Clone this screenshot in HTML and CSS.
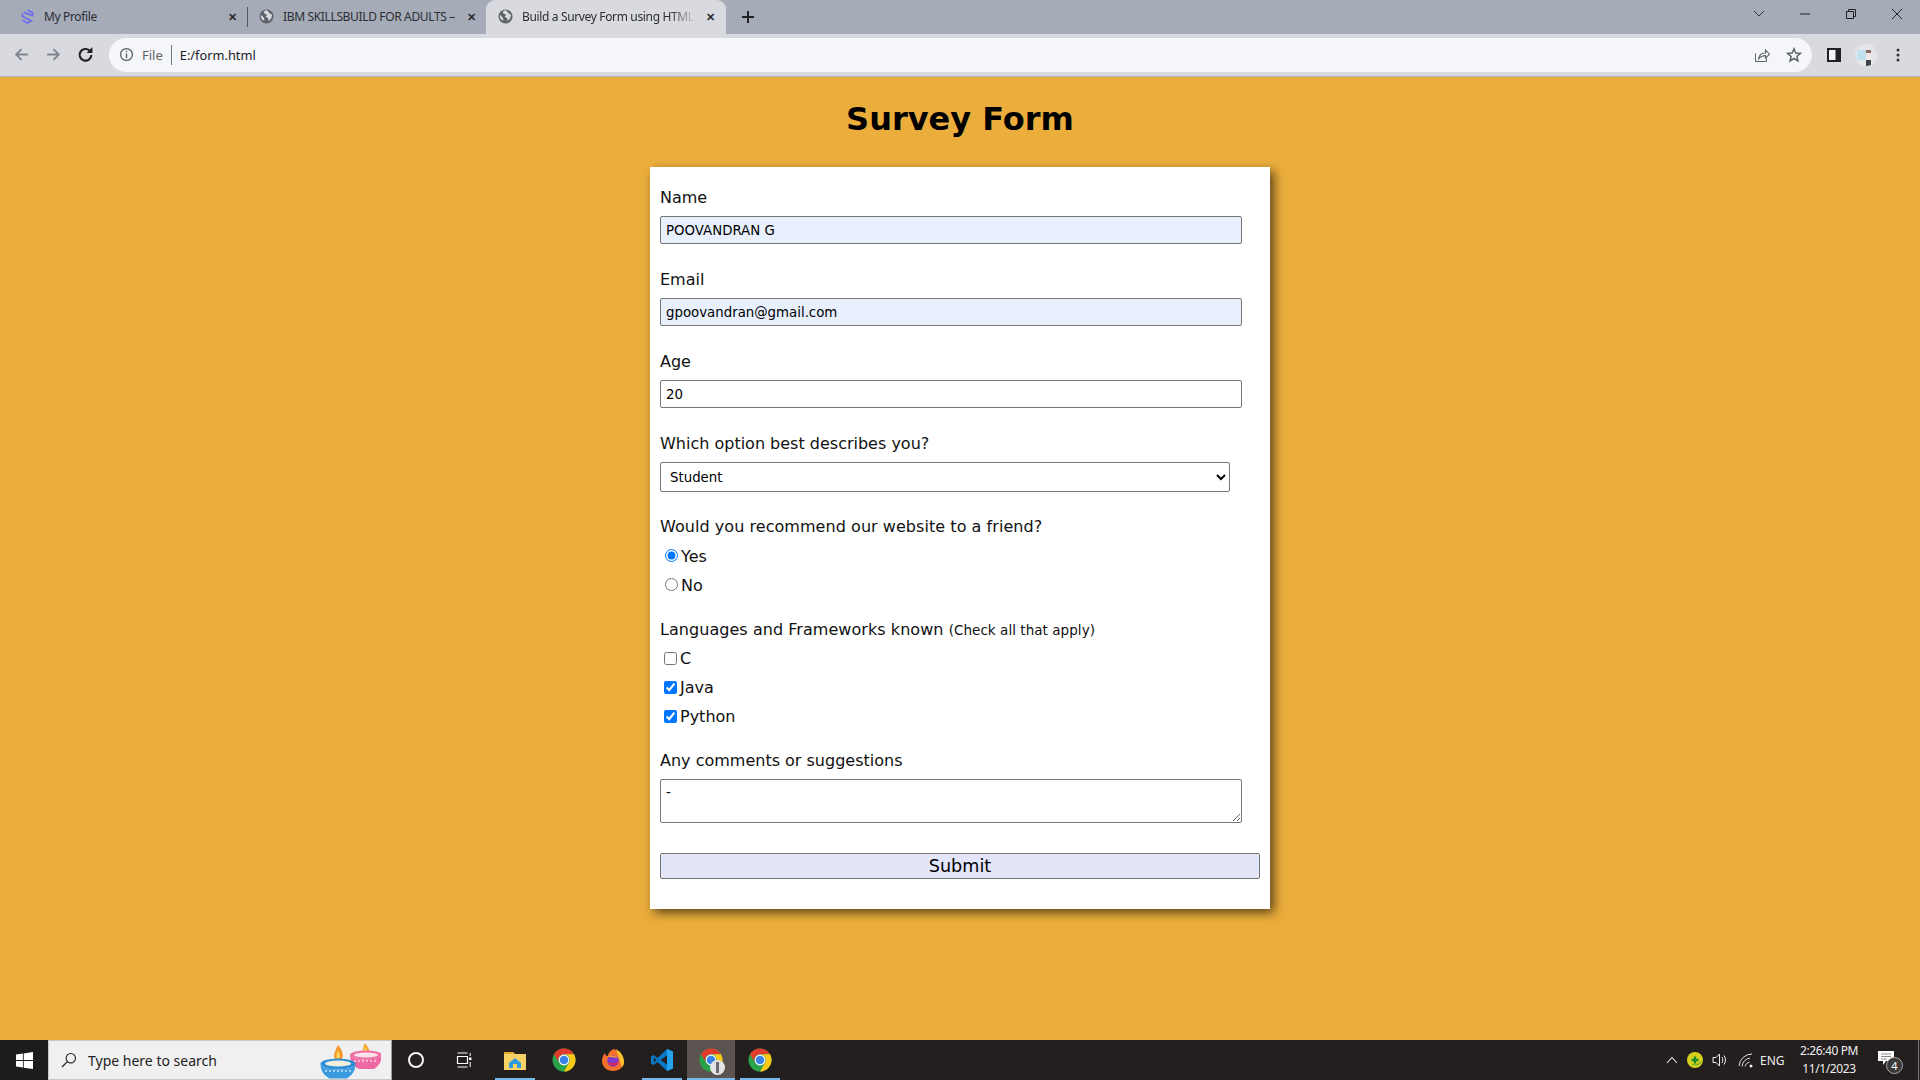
FILE: index.html
```html
<!DOCTYPE html>
<html lang="en">
<head>
<meta charset="utf-8">
<title>Build a Survey Form using HTML</title>
<link rel="stylesheet" href="styles.css">
</head>
<body>
<header class="chrome">
  <div class="tabstrip">
    <div class="tab">
      <svg class="favicon" viewBox="0 0 16 16"><path d="M8 1 13.500 4v3L4 3.600M2.600 4.600V8L12 12.600 8 15l-5.400-3" fill="none" stroke="#6a6cf0" stroke-width="1.700"/></svg>
      <span class="tab-title">My Profile</span>
      <span class="tab-x">✕</span>
    </div>
    <div class="tab-sep"></div>
    <div class="tab">
      <svg class="favicon" viewBox="0 0 16 16"><circle cx="8" cy="8" r="7.500" fill="#5f6368"/><path d="M8 1 5 3l1 2 3 1-2 2 3 2 0 3 3-3 1-4-2-1zM2 6l3 3 1 3-2 0-2-3z" fill="#d8dae0"/></svg>
      <span class="tab-title">IBM SKILLSBUILD FOR ADULTS –</span>
      <span class="tab-x">✕</span>
    </div>
    <div class="tab tab-active">
      <svg class="favicon" viewBox="0 0 16 16"><circle cx="8" cy="8" r="7.500" fill="#5f6368"/><path d="M8 1 5 3l1 2 3 1-2 2 3 2 0 3 3-3 1-4-2-1zM2 6l3 3 1 3-2 0-2-3z" fill="#d8dae0"/></svg>
      <span class="tab-title tab-title-fade">Build a Survey Form using HTML</span>
      <span class="tab-x">✕</span>
    </div>
    <svg class="new-tab" viewBox="0 0 14 14"><path d="M7 1v12M1 7h12" stroke="#202124" stroke-width="2"/></svg>
    <div class="window-controls">
      <svg class="win-ico" viewBox="0 0 46 14"><path d="M18 4l5 5 5-5" fill="none" stroke="#333" stroke-width="1"/></svg>
      <svg class="win-ico" viewBox="0 0 46 14"><path d="M18 7h10" stroke="#222" stroke-width="1"/></svg>
      <svg class="win-ico" viewBox="0 0 46 14"><path d="M18.500 4.500h7v7h-7zM20.500 4.500v-2h7v7h-2" fill="none" stroke="#222" stroke-width="1"/></svg>
      <svg class="win-ico" viewBox="0 0 46 14"><path d="M18 2l10 10M28 2 18 12" stroke="#222" stroke-width="1"/></svg>
    </div>
  </div>
  <div class="toolbar">
    <div class="nav">
      <svg class="nav-ico" viewBox="0 0 16 16"><path d="M14 8H3M8 3 3 8l5 5" fill="none" stroke="#80848c" stroke-width="1.700"/></svg>
      <svg class="nav-ico" viewBox="0 0 16 16"><path d="M2 8h11M8 3l5 5-5 5" fill="none" stroke="#80848c" stroke-width="1.700"/></svg>
      <svg class="nav-ico" viewBox="0 0 16 16"><path d="M13.500 8.500A5.500 5.500 0 1 1 11.800 4.300" fill="none" stroke="#202124" stroke-width="2"/><path d="M9 6.500h5.500V1z" fill="#202124"/></svg>
    </div>
    <div class="omnibox">
      <svg class="info" viewBox="0 0 16 16"><circle cx="8" cy="8" r="6.300" fill="none" stroke="#5f6368" stroke-width="1.400"/><path d="M8 7v5M8 4v1.600" stroke="#5f6368" stroke-width="1.500"/></svg>
      <span class="scheme">File</span>
      <span class="omni-sep"></span>
      <span class="url">E:/form.html</span>
      <svg class="omni-ico omni-share" viewBox="0 0 16 16"><path d="M1.500 6.500v8h11v-3" fill="none" stroke="#5f6368" stroke-width="1"/><path d="M4.500 12c.5-4 3.500-6 7-6V3l4 4.200-4 4V8.600c-3 0-5 1-7 3.400z" fill="none" stroke="#5f6368" stroke-width="1.100"/></svg>
      <svg class="omni-ico" viewBox="0 0 16 16"><path d="m8 1.800 1.800 4.200 4.500.4-3.400 3 1 4.500L8 11.500l-3.900 2.400 1-4.500-3.400-3 4.500-.4z" fill="none" stroke="#5f6368" stroke-width="1.500"/></svg>
    </div>
    <div class="tools">
      <svg class="tool-panel" viewBox="0 0 14 14"><rect width="14" height="14" fill="#202124"/><rect x="2" y="2" width="6.500" height="10" fill="#f1f3f4"/></svg>
      <div class="avatar"><span class="avatar-screen"></span><span class="avatar-man"></span></div>
      <svg class="tool-dots" viewBox="0 0 4 14"><circle cx="2" cy="2" r="1.500" fill="#303134"/><circle cx="2" cy="7" r="1.500" fill="#303134"/><circle cx="2" cy="12" r="1.500" fill="#303134"/></svg>
    </div>
  </div>
</header>

<main class="page">
  <h1 class="title">Survey Form</h1>
  <form class="card">
    <div class="field">
      <label class="label" for="name">Name</label>
      <input class="text-input filled" id="name" type="text" value="POOVANDRAN G">
    </div>
    <div class="field">
      <label class="label" for="email">Email</label>
      <input class="text-input filled" id="email" type="text" value="gpoovandran@gmail.com">
    </div>
    <div class="field">
      <label class="label" for="age">Age</label>
      <input class="text-input" id="age" type="text" value="20">
    </div>
    <div class="field field-select">
      <label class="label" for="role">Which option best describes you?</label>
      <select class="select" id="role"><option>Student</option></select>
    </div>
    <div class="field field-options">
      <div class="label label-tight">Would you recommend our website to a friend?</div>
      <label class="choice"><input class="radio" type="radio" name="rec" checked>Yes</label>
      <label class="choice"><input class="radio" type="radio" name="rec">No</label>
    </div>
    <div class="field field-options">
      <div class="label label-tight label-checks">Languages and Frameworks known <small class="hint">(Check all that apply)</small></div>
      <label class="choice"><input class="check" type="checkbox">C</label>
      <label class="choice"><input class="check" type="checkbox" checked>Java</label>
      <label class="choice"><input class="check" type="checkbox" checked>Python</label>
    </div>
    <div class="field">
      <label class="label" for="comments">Any comments or suggestions</label>
      <textarea class="textarea" id="comments">-</textarea>
    </div>
    <button class="submit" type="button">Submit</button>
  </form>
</main>

<footer class="taskbar">
  <div class="start">
    <svg class="start-ico" viewBox="0 0 16 16"><path d="M0 2.300 6.500 1.400v6.200H0zM7.300 1.300 16 0v7.600H7.300zM0 8.400h6.500v6.200L0 13.700zM7.300 8.400H16V16l-8.700-1.200z" fill="#fff"/></svg>
  </div>
  <div class="search">
    <svg class="search-ico" viewBox="0 0 16 16"><circle cx="9.800" cy="6.200" r="4.700" fill="none" stroke="#222" stroke-width="1.100"/><path d="M6.400 9.600 1 15" stroke="#222" stroke-width="1.300"/></svg>
    <span class="search-text">Type here to search</span>
    <svg class="diya" viewBox="0 0 62 38">
      <path d="M46 2c3 4 5 7 4 10-1 2-5 2-6 0-1-3 0-6 2-10z" fill="#f3a52f"/>
      <path d="M46 6c1.500 2 2 4 1.500 6h-3c-.5-2 .5-4 1.500-6z" fill="#fbd968"/>
      <ellipse cx="47" cy="14" rx="16" ry="4.500" fill="#ef6fa6"/>
      <ellipse cx="47" cy="14" rx="12" ry="2.500" fill="#fbe3e8"/>
      <path d="M31 14.500c3 3 8 4 16 4s13-1 16-4c-.5 7-4 11-8 13.500H40c-5-2.500-8.500-6.500-9-13.500z" fill="#ee68a3"/>
      <path d="M35 20h24" stroke="#fbd3e2" stroke-width="1.500" stroke-dasharray="2 2"/>
      <path d="M19 4c4 5 5.500 9 4.500 13-1 2.500-7 2.500-8 0-1-4 1-8 3.500-13z" fill="#f5962a"/>
      <path d="M19 9c1.500 3 2 5 1.500 8h-3c-.5-3 .5-5 1.500-8z" fill="#fcd45f"/>
      <ellipse cx="19" cy="23" rx="17.500" ry="5.500" fill="#2e8fd6"/>
      <ellipse cx="19" cy="22.500" rx="13" ry="3" fill="#f3eedd"/>
      <path d="M1.500 24c3 3 8 4.500 17.500 4.500S33.500 27 36.500 24c-.5 7-4.500 11-9 13.500h-17C6 35 2 31 1.500 24z" fill="#3a9be0"/>
      <path d="M6 30h26" stroke="#c6e6f8" stroke-width="1.500" stroke-dasharray="2 2"/>
    </svg>
  </div>
  <div class="task task-cortana"><span class="cortana"></span></div>
  <div class="task task-view">
    <svg class="task-ico-s" viewBox="0 0 16 16"><path d="M1.500 1h10M1.500 15h10M1.500 4.500h10v7h-10z" fill="none" stroke="#fff" stroke-width="1.200"/><rect x="13" y="5.500" width="2.500" height="2.500" fill="#fff"/><path d="M14.200 10v5M14.200 1v3" stroke="#fff"/></svg>
  </div>
  <div class="task task-on">
    <svg class="task-ico" viewBox="0 0 24 24"><path d="M1 4h9l2 2h11v16H1z" fill="#f6d164"/><path d="M1 4h9l2 2H1z" fill="#e2a72e"/><path d="M6 15l6-5 6 5v5H6z" fill="#2f9be0"/><path d="M10 16h4v4h-4z" fill="#f6d164"/></svg>
  </div>
  <div class="task">
    <svg class="task-ico" viewBox="0 0 24 24"><use href="#chrome-logo"/></svg>
  </div>
  <div class="task">
    <svg class="task-ico" viewBox="0 0 24 24"><path d="M13 1c4 2 4 4 5 5 3 2 5 5 5 8 0 5-5 9-11 9S1 19 1 13c0-3 1-6 3-8 0 2 1 3 3 3 0-3 3-6 6-7z" fill="#f5702a"/><path d="M15 1c5 3 8 7 8 13 0 2-1 4-2 5-2-6-4-11-6-18z" fill="#fcc22b"/><circle cx="12" cy="13" r="5.800" fill="#7b3ad0"/><path d="M6.500 13c2 3 7 3 11 0-1 6-10 6-11 0z" fill="#e22850"/><path d="M7 9c2-2 7-2 9 1-3-1-6-1-9-1z" fill="#f8a02c"/></svg>
  </div>
  <div class="task task-on">
    <svg class="task-ico" viewBox="0 0 24 24"><path d="M17 1 7.500 10 3.500 7 1 8.500v7L3.500 17l4-3L17 23l6-2.500v-17z" fill="#0a78c8"/><path d="M17 1l6 2.500v17L17 23z" fill="#25a3ee"/><path d="M17 7.500 10.500 12 17 16.500z" fill="#221f1e"/><path d="M3.800 9.500v5L6.300 12z" fill="#221f1e"/></svg>
  </div>
  <div class="task task-on task-active">
    <svg class="task-ico" viewBox="0 0 24 24"><use href="#chrome-logo"/></svg>
    <span class="task-badge"><span class="task-badge-man"></span></span>
  </div>
  <div class="task task-on">
    <svg class="task-ico" viewBox="0 0 24 24"><use href="#chrome-logo"/></svg>
  </div>
  <div class="tray">
    <svg class="tray-chev" viewBox="0 0 12 8"><path d="M1 7l5-5.500L11 7" fill="none" stroke="#eee" stroke-width="1.100"/></svg>
    <svg class="tray-360" viewBox="0 0 16 16"><circle cx="8" cy="8" r="8" fill="#d8d020"/><path d="M3 11a7 7 0 0 0 12-3A8 8 0 0 1 3 11z" fill="#2f9a3a"/><path d="M8 4.500v7M4.500 8h7" stroke="#1d8a2e" stroke-width="2.400"/></svg>
    <svg class="tray-sound" viewBox="0 0 16 16"><path d="M1 5.500h3L7.500 2v12L4 10.500H1z" fill="none" stroke="#eee"/><path d="M10 5c1 2 1 4 0 6M12 3.500c2 3 2 6 0 9" fill="none" stroke="#eee"/></svg>
    <svg class="tray-wifi" viewBox="0 0 16 16"><path d="M1 14A13 13 0 0 1 14 2M4 14.500A10 10 0 0 1 12 6M7 14.500A6 6 0 0 1 11.500 10" fill="none" stroke="#ddd"/><circle cx="13" cy="14" r="1.500" fill="#eee"/></svg>
    <span class="tray-lang">ENG</span>
    <div class="clock"><span>2:26:40 PM</span><span>11/1/2023</span></div>
    <div class="notify">
      <svg class="notify-ico" viewBox="0 0 16 14"><path d="M0 0h16v10H8l-3 4v-4H0z" fill="#fff"/><path d="M3 3h10M3 5.500h10M3 8h6" stroke="#888"/></svg>
      <span class="notify-count">4</span>
    </div>
    <span class="show-desktop"></span>
  </div>
</footer>

<svg class="defs" width="0" height="0">
  <defs>
    <g id="chrome-logo">
      <circle cx="12" cy="12" r="11.500" fill="#2aa24a"/>
      <path d="M2.040 6.250A11.500 11.500 0 0 1 21.960 6.250H12A5.750 5.750 0 0 0 7.020 14.870z" fill="#e33b2e"/>
      <path d="M21.960 6.250A11.500 11.500 0 0 1 12 23.500L16.980 14.870A5.750 5.750 0 0 0 12 6.250z" fill="#fbc916"/>
      <circle cx="12" cy="12" r="5.400" fill="#fff"/>
      <circle cx="12" cy="12" r="4.300" fill="#3b82e8"/>
    </g>
  </defs>
</svg>
</body>
</html>
```
FILE: styles.css
```css
* { box-sizing: border-box; }
html, body { margin: 0; height: 100%; }
body {
  display: flex;
  flex-direction: column;
  height: 1080px;
  overflow: hidden;
  font-family: "DejaVu Sans", sans-serif;
  background: #ebae3c;
}

/* browser frame */
.chrome { flex: none; font-family: "Noto Sans", "Open Sans", sans-serif; }
.tabstrip {
  display: flex;
  align-items: flex-end;
  height: 34px;
  background: #a6abb8;
  color: #2b2d33;
}
.tab {
  display: flex;
  align-items: center;
  width: 239px;
  height: 34px;
  padding: 0 1px 2px 20px;
  font-size: 12px;
  flex: none;
}
.tab-active {
  width: 240px;
  margin-left: 8px;
  padding: 0 10px 2px 12px;
  background: #d8dae0;
  border-radius: 9px 9px 0 0;
}
.tab-sep { width: 1px; height: 20px; margin: 0 -9px 7px 8px; background: #555a66; flex: none; }
.favicon { width: 15px; height: 15px; margin-right: 9px; flex: none; }
.tab-title { flex: 1; overflow: hidden; white-space: nowrap; min-width: 0; letter-spacing: -.35px; }
.tab-title-fade { -webkit-mask-image: linear-gradient(90deg, #000 85%, transparent 100%); mask-image: linear-gradient(90deg, #000 85%, transparent 100%); }
.tab-x { width: 12px; margin-left: 8px; font-size: 11px; font-weight: 700; text-align: center; flex: none; }
.new-tab { width: 14px; height: 14px; margin: 0 0 10px 15px; flex: none; }
.window-controls { display: flex; margin-left: auto; margin-bottom: 13px; }
.win-ico { width: 46px; height: 14px; display: block; }

.toolbar {
  display: flex;
  align-items: center;
  height: 43px;
  padding: 0 13px 1px 0;
  background: #d8dae0;
  border-bottom: 1px solid #b3b4ba;
}
.nav { display: flex; align-items: center; gap: 15px; padding-left: 13px; width: 109px; flex: none; }
.nav-ico { width: 17px; height: 17px; flex: none; }
.omnibox {
  display: flex;
  align-items: center;
  flex: 1;
  height: 34px;
  padding: 0 10px 0 10px;
  background: #f5f6f9;
  border-radius: 17px;
  font-size: 13px;
}
.info { width: 15px; height: 15px; margin-right: 8px; flex: none; }
.scheme { color: #5f6368; font-size: 13px; }
.omni-sep { width: 1px; height: 20px; margin: 0 8px 0 8px; background: #70757a; }
.url { color: #202124; font-size: 12.800px; flex: 1; }
.omni-ico { width: 16px; height: 16px; flex: none; }
.omni-share { margin-right: 16px; }
.tools { display: flex; align-items: center; width: 95px; padding-left: 15px; flex: none; }
.tool-panel { width: 14px; height: 14px; flex: none; }
.avatar {
  position: relative;
  width: 22px;
  height: 22px;
  margin: 0 19px 0 14px;
  border-radius: 50%;
  background: #e4e6ea;
  overflow: hidden;
  flex: none;
}
.avatar-screen { position: absolute; left: 2px; top: 6px; width: 10px; height: 10px; background: #bfe0ee; }
.avatar-man { position: absolute; left: 11px; top: 6px; width: 5px; height: 16px; background: linear-gradient(#8a6a60 20%, #f0e6e6 20%, #f0e6e6 60%, #40424c 60%); }
.tool-dots { width: 4px; height: 14px; flex: none; }

/* page */
.page { flex: 1; min-height: 0; }
.title {
  margin: 0;
  padding-top: 22px;
  height: 90px;
  font-size: 32px;
  line-height: 40px;
  text-align: center;
  color: #000;
}
.card {
  width: 620px;
  height: 742px;
  margin: 0 auto;
  padding: 20px 10px 30px;
  background: #fff;
  box-shadow: 4px 4px 10px rgba(0, 0, 0, .6);
  display: flex;
  flex-direction: column;
}
.field { display: flex; flex-direction: column; align-items: flex-start; margin-bottom: 25px; }
.field-select { margin-bottom: 24px; }
.field-options { margin-bottom: 19px; }
.label { font-size: 16px; line-height: 22px; margin-bottom: 7px; color: #111; display: block; }
.label-tight { margin-bottom: 4px; letter-spacing: .05px; }
.label-checks { margin-bottom: 3px; }
.hint { font-size: 13.500px; }
.text-input {
  width: 582px;
  height: 28px;
  padding: 5px;
  border: 1px solid #767676;
  border-radius: 2px;
  font: 13.333px "DejaVu Sans", sans-serif;
  color: #000;
  background: #fff;
}
.filled { background: #e8f0fe; }
.select {
  width: 570px;
  height: 30px;
  padding: 5px;
  border: 1px solid #767676;
  border-radius: 2px;
  font: 13.333px "DejaVu Sans", sans-serif;
  background: #fff;
  color: #000;
}
.choice {
  display: flex;
  align-items: center;
  height: 29px;
  font-size: 16px;
  color: #111;
}
.radio { width: 13px; height: 13px; margin: 0 3px 2px 5px; }
.check { width: 13px; height: 13px; margin: 0 3px 0 4px; }
.textarea {
  width: 582px;
  height: 44px;
  padding: 5px;
  border: 1px solid #767676;
  border-radius: 2px;
  font: 13.333px "DejaVu Sans", sans-serif;
  display: block;
}
.submit {
  width: 600px;
  height: 26px;
  margin-top: 5px;
  padding: 0;
  border: 1px solid #767676;
  border-radius: 2px;
  background: #e3e5f9;
  font: 17.600px "DejaVu Sans", sans-serif;
  color: #000;
}

/* taskbar */
.taskbar {
  display: flex;
  align-items: stretch;
  flex: none;
  height: 40px;
  background: #221f1e;
  color: #eee;
  font-family: "Noto Sans", "Open Sans", sans-serif;
}
.start { display: flex; align-items: center; justify-content: center; width: 48px; background: #1c1c1c; flex: none; }
.start-ico { width: 17px; height: 17px; }
.search {
  display: flex;
  align-items: center;
  width: 344px;
  padding: 0 10px 0 12px;
  background: #f0f0f0;
  border: 1px solid #c8c8c8;
  border-right-color: #999;
  flex: none;
  color: #222;
  font-size: 14px;
}
.search-ico { width: 16px; height: 16px; margin-right: 11px; flex: none; }
.search-text { flex: 1; }
.diya { width: 62px; height: 38px; flex: none; }
.task {
  position: relative;
  display: flex;
  align-items: center;
  justify-content: center;
  width: 48px;
  margin-right: 1px;
  flex: none;
}
.task-cortana { margin-right: 0; }
.task-view { margin-right: 3px; }
.task-on::after {
  content: "";
  position: absolute;
  left: 4px;
  right: 4px;
  bottom: 0;
  height: 2px;
  background: #76b9ed;
}
.task-active { background: #5b5451; }
.task-active::after { left: 0; right: 0; }
.cortana { width: 16px; height: 16px; border: 2.500px solid #f4f4f4; border-radius: 50%; }
.task-ico { width: 24px; height: 24px; }
.task-ico-s { width: 16px; height: 16px; }
.task-badge { position: absolute; right: 10px; bottom: 5px; width: 15px; height: 15px; border-radius: 50%; background: #e4e4e4; }
.task-badge-man { position: absolute; left: 6px; top: 2px; width: 3px; height: 11px; background: #6a6a70; }
.tray { display: flex; align-items: center; margin-left: auto; height: 100%; font-size: 12px; }
.tray-chev { width: 12px; height: 8px; margin-right: 9px; }
.tray-360 { width: 16px; height: 16px; margin-right: 9px; }
.tray-sound { width: 16px; height: 16px; margin-right: 10px; }
.tray-wifi { width: 16px; height: 16px; margin-right: 6px; }
.tray-lang { width: 26px; margin-right: 10px; font-size: 12px; }
.clock { display: flex; flex-direction: column; align-items: center; width: 66px; font-size: 12px; line-height: 18px; letter-spacing: -.4px; }
.notify { position: relative; width: 34px; height: 30px; margin-left: 10px; }
.notify-ico { position: absolute; left: 6px; top: 6px; width: 16px; height: 14px; }
.notify-count {
  position: absolute;
  left: 14px;
  top: 12px;
  width: 17px;
  height: 17px;
  border: 1px solid #aaa;
  border-radius: 50%;
  background: #3a3a3a;
  font-size: 11px;
  line-height: 15px;
  text-align: center;
  color: #fff;
}
.show-desktop { width: 1px; height: 100%; margin: 0 1px 0 12px; background: #777; }
.defs { position: absolute; }
```
